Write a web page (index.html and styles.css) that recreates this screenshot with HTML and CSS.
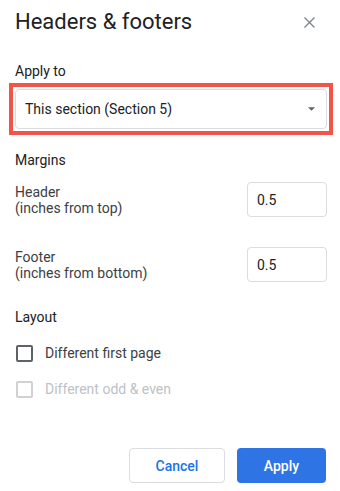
FILE: index.html
```html
<!DOCTYPE html>
<html>
<head>
<meta charset="utf-8">
<link rel="stylesheet" href="styles.css">
</head>
<body>
<div class="dialog">
  <div class="title-row">
    <h1 class="title">Headers &amp; footers</h1>
    <span class="close" aria-label="Close">
      <svg width="11" height="11" viewBox="0 0 11 11"><path d="M0.5 0.5L10.5 10.5M10.5 0.5L0.5 10.5" stroke="#80868b" stroke-width="1.4" fill="none"/></svg>
    </span>
  </div>

  <div class="label apply-label">Apply to</div>
  <div class="highlight">
    <div class="select">
      <span class="select-text">This section (Section 5)</span>
      <svg class="caret" width="10" height="5" viewBox="0 0 10 5"><path d="M0 0H10L5 5Z" fill="#5f6368"/></svg>
    </div>
  </div>

  <div class="label section-label">Margins</div>
  <div class="field-row first">
    <div class="field-label">Header<br>(inches from top)</div>
    <div class="input">0.5</div>
  </div>
  <div class="field-row second">
    <div class="field-label">Footer<br>(inches from bottom)</div>
    <div class="input">0.5</div>
  </div>

  <div class="label layout-label">Layout</div>
  <div class="check-row">
    <span class="checkbox"></span>
    <span class="check-text">Different first page</span>
  </div>
  <div class="check-row disabled">
    <span class="checkbox"></span>
    <span class="check-text">Different odd &amp; even</span>
  </div>

  <div class="actions">
    <button class="btn cancel">Cancel</button>
    <button class="btn apply">Apply</button>
  </div>
</div>
</body>
</html>
```
FILE: styles.css
```css
html, body {
  margin: 0;
  padding: 0;
  background: #ffffff;
}
body {
  font-family: Roboto, "Liberation Sans", Arial, sans-serif;
  color: #202124;
  width: 340px;
  height: 491px;
  overflow: hidden;
}
.dialog {
  padding: 10px 0 0 15px;
  width: 325px;
  box-sizing: border-box;
}
.title-row {
  display: flex;
  align-items: center;
  justify-content: space-between;
  padding-right: 10px;
  height: 24px;
}
.title {
  margin: 0;
  font-size: 22px;
  line-height: 24px;
  font-weight: 400;
  color: #202124;
}
.close {
  display: flex;
  width: 11px;
  height: 11px;
  margin-top: 0;
}
.label {
  font-size: 14px;
  line-height: 20px;
  color: #202124;
}
.apply-label {
  margin-top: 27px;
}
.highlight {
  margin: 2px 0 0 -6px;
  width: 324px;
  box-sizing: border-box;
  border: 4px solid #f25548;
  padding: 2px;
}
.select {
  height: 40px;
  box-sizing: border-box;
  border: 1px solid #dadce0;
  border-radius: 4px;
  display: flex;
  align-items: center;
  justify-content: space-between;
  padding: 0 11px 0 9px;
}
.select-text {
  font-size: 14px;
  color: #202124;
}
.caret {
  width: 7px;
  height: 4px;
}
.section-label {
  margin-top: 15px;
}
.field-row {
  display: flex;
  align-items: center;
  justify-content: space-between;
  width: 312px;
}
.field-row.first {
  margin-top: 12px;
}
.field-row.second {
  margin-top: 30px;
}
.field-label {
  font-size: 14px;
  line-height: 16px;
  color: #3c4043;
}
.input {
  width: 80px;
  height: 35px;
  box-sizing: border-box;
  border: 1px solid #dadce0;
  border-radius: 4px;
  font-size: 14px;
  display: flex;
  align-items: center;
  padding-left: 9px;
  color: #202124;
}
.layout-label {
  margin-top: 25px;
}
.check-row {
  display: flex;
  align-items: center;
  height: 18px;
  margin-top: 17px;
}
.check-row.disabled {
  margin-top: 18px;
}
.checkbox {
  width: 17px;
  height: 17px;
  box-sizing: border-box;
  border: 2px solid #5f6368;
  border-radius: 2px;
  margin-left: 1px;
}
.check-text {
  font-size: 14px;
  margin-left: 12px;
  color: #3c4043;
}
.disabled .checkbox {
  border-color: #cfd1d4;
}
.disabled .check-text {
  color: #bdc1c6;
}
.actions {
  display: flex;
  justify-content: flex-end;
  gap: 12px;
  margin-top: 50px;
  width: 311px;
}
.btn {
  height: 35px;
  border-radius: 4px;
  font-family: Roboto, "Liberation Sans", Arial, sans-serif;
  font-size: 14px;
  font-weight: 500;
  box-sizing: border-box;
  cursor: pointer;
}
.cancel {
  width: 96px;
  background: #ffffff;
  border: 1px solid #dadce0;
  color: #1a73e8;
}
.apply {
  width: 89px;
  background: #2f74e4;
  border: none;
  color: #ffffff;
}
```
